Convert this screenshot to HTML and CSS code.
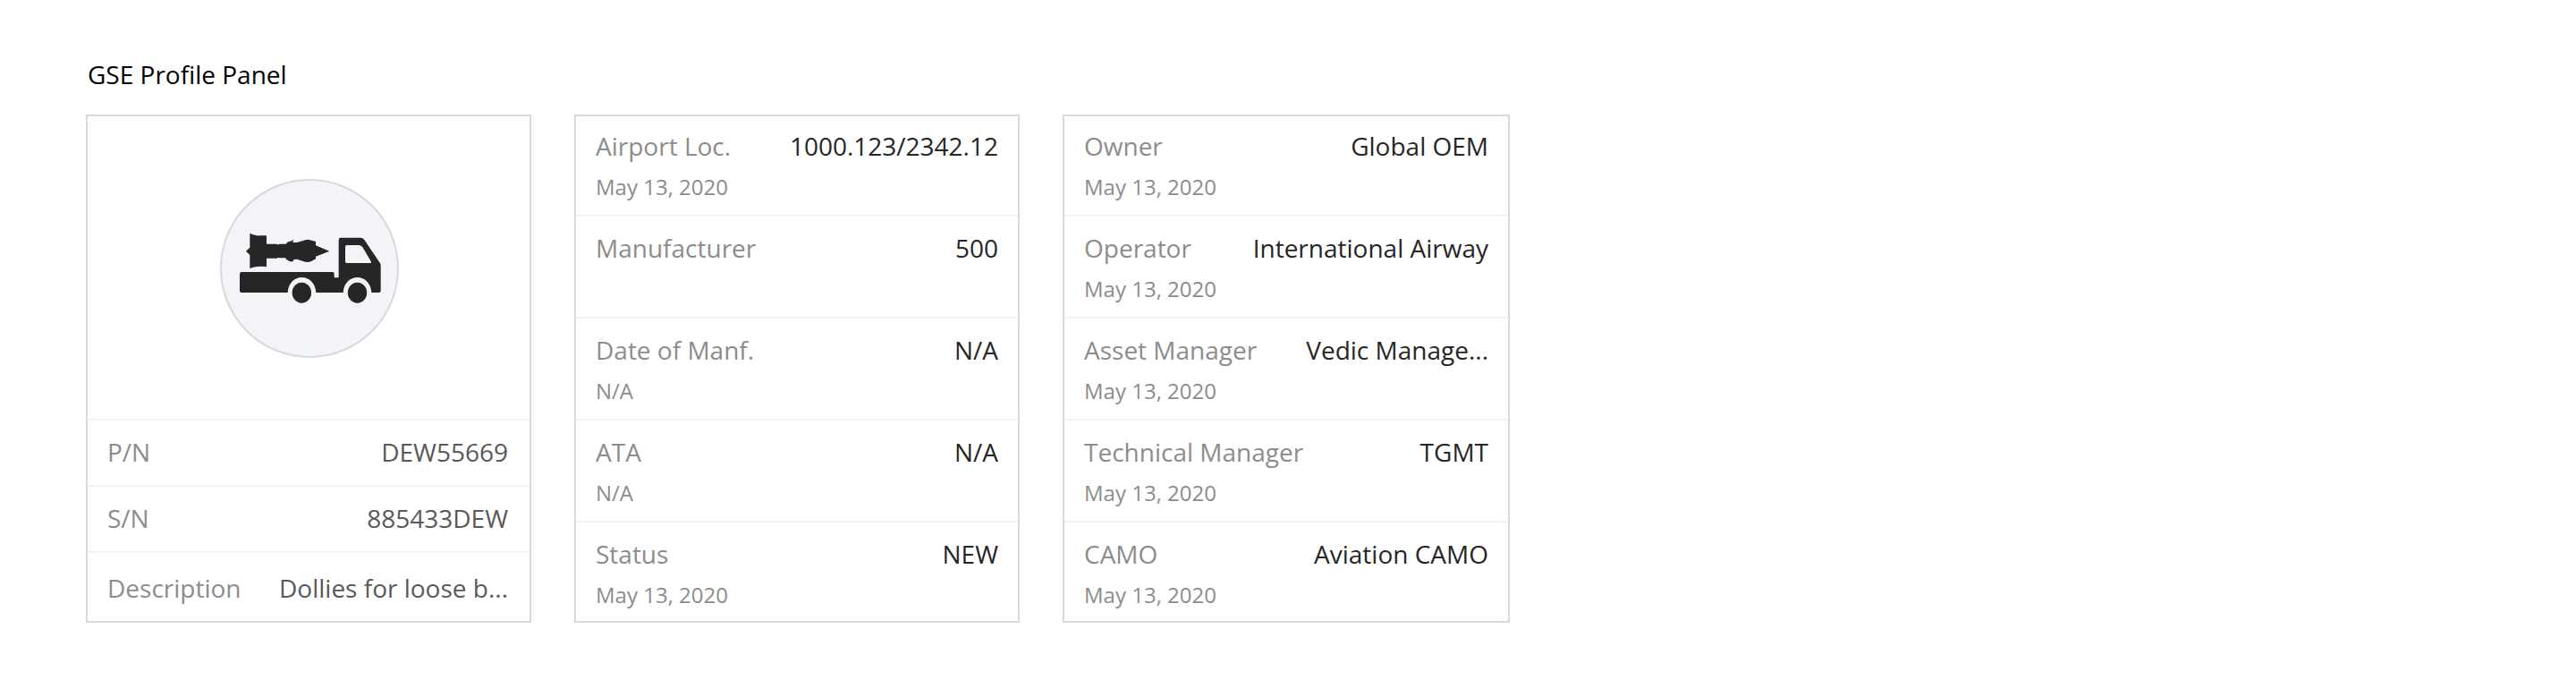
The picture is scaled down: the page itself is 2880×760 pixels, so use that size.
FILE: index.html
```html
<!DOCTYPE html>
<html lang="en">
<head>
    <meta charset="UTF-8">
    <meta name="viewport" content="width=device-width, initial-scale=1.0">
    <title>GSE Profile Panel</title>
    <link rel="stylesheet" href="styles.css">
</head>
<body>

    <h1 class="panel-title">GSE Profile Panel</h1>

    <div class="panel">
        <!-- Equipment picture and part numbers -->
        <section class="card summary">
            <div class="picture">
                <div class="avatar">
                    <svg class="truck-icon" viewBox="108 210 480 240" aria-hidden="true">
                        <path d="M148 212 Q156 216 168 219 Q174 221 180 220 L204 220 V248 H239 L242 251 L246 248 H269 Q272 240 281 239 L290 238 V234 L293 234 V243 L306 243 L334 235 L344 233 L369 240 V253 L415 272 L369 290 V298 L356 305 L344 309 L334 308 L306 299 L295 300 L293 307 H281 Q278 302 269 299 V295 H246 L242 293 L239 296 H204 V324 L180 323 Q160 324 148 330 V285 L135 272 L148 260 Z"/>
                        <path fill-rule="evenodd" d="M120 342 H426 Q431 342 431 348 V361 H446 V234 Q446 227 453 227 H519 Q527 227 532 234 L585 313 Q587 316 587 320 V405 Q587 411 581 411 H556 C554 379 533 360 509 360 C484 360 463 379 461 411 H370 C368 379 347 360 322 360 C298 360 277 379 275 411 H120 Q114 411 114 405 V348 Q114 342 120 342 Z M473 252 Q468 252 468 257 V307 Q468 312 473 312 H551 Q557 312 554 306 L527 260 Q522 252 514 252 Z"/>
                        <ellipse cx="322" cy="411.500" rx="32" ry="34.500"/>
                        <ellipse cx="508.500" cy="411.500" rx="32" ry="34.500"/>
                    </svg>
                </div>
            </div>
            <div class="summary-row">
                <span class="label">P/N</span>
                <span class="value">DEW55669</span>
            </div>
            <div class="summary-row">
                <span class="label">S/N</span>
                <span class="value">885433DEW</span>
            </div>
            <div class="summary-row">
                <span class="label">Description</span>
                <span class="value">Dollies for loose b...</span>
            </div>
        </section>

        <!-- Location and manufacturing -->
        <section class="card">
            <div class="row">
                <div class="line">
                    <span class="label">Airport Loc.</span>
                    <span class="value">1000.123/2342.12</span>
                </div>
                <div class="date">May 13, 2020</div>
            </div>
            <div class="row">
                <div class="line">
                    <span class="label">Manufacturer</span>
                    <span class="value">500</span>
                </div>
            </div>
            <div class="row">
                <div class="line">
                    <span class="label">Date of Manf.</span>
                    <span class="value">N/A</span>
                </div>
                <div class="date">N/A</div>
            </div>
            <div class="row">
                <div class="line">
                    <span class="label">ATA</span>
                    <span class="value">N/A</span>
                </div>
                <div class="date">N/A</div>
            </div>
            <div class="row">
                <div class="line">
                    <span class="label">Status</span>
                    <span class="value">NEW</span>
                </div>
                <div class="date">May 13, 2020</div>
            </div>
        </section>

        <!-- Ownership and management -->
        <section class="card">
            <div class="row">
                <div class="line">
                    <span class="label">Owner</span>
                    <span class="value">Global OEM</span>
                </div>
                <div class="date">May 13, 2020</div>
            </div>
            <div class="row">
                <div class="line">
                    <span class="label">Operator</span>
                    <span class="value">International Airway</span>
                </div>
                <div class="date">May 13, 2020</div>
            </div>
            <div class="row">
                <div class="line">
                    <span class="label">Asset Manager</span>
                    <span class="value">Vedic Manage...</span>
                </div>
                <div class="date">May 13, 2020</div>
            </div>
            <div class="row">
                <div class="line">
                    <span class="label">Technical Manager</span>
                    <span class="value">TGMT</span>
                </div>
                <div class="date">May 13, 2020</div>
            </div>
            <div class="row">
                <div class="line">
                    <span class="label">CAMO</span>
                    <span class="value">Aviation CAMO</span>
                </div>
                <div class="date">May 13, 2020</div>
            </div>
        </section>
    </div>

</body>
</html>
```

FILE: styles.css
```css
* {
    box-sizing: border-box;
}

body {
    margin: 0;
    padding: 64px 96px;
    background-color: #fff;
    font-family: "Open Sans", sans-serif;
    font-size: 28px;
    line-height: 38px;
    color: #262626;
}

.panel-title {
    margin: 0 0 26px 2px;
    font-size: 28px;
    font-weight: 400;
    color: #000;
}

.panel {
    display: grid;
    grid-template-columns: 498px 498px 500px;
    gap: 48px;
}

.card {
    height: 568px;
    border: 2px solid #d5d9e0;
    background-color: #fff;
}

.label,
.date {
    color: #8c8c8c;
}

.value {
    color: #262626;
    white-space: nowrap;
}

.picture {
    display: flex;
    justify-content: center;
    height: 340px;
    padding: 70px 0 0 2px;
    border-bottom: 2px solid #f2f3f8;
}

.avatar {
    display: flex;
    align-items: center;
    justify-content: center;
    width: 200px;
    height: 200px;
    border: 2px solid #d5d9e0;
    border-radius: 50%;
    background-color: #f2f4f8;
}

.truck-icon {
    width: 160px;
    height: 80px;
    fill: #262626;
}

.summary-row {
    display: flex;
    justify-content: space-between;
    height: 74px;
    padding: 16px 24px 0 22px;
    border-bottom: 2px solid #f2f3f8;
}

.summary-row:last-child {
    padding-top: 20px;
    border-bottom: none;
}

.summary-row .value {
    color: #595959;
}

.row {
    height: 114px;
    padding: 16px 22px 0;
    border-bottom: 2px solid #f2f3f8;
}

.row:first-child {
    height: 112px;
    padding-top: 14px;
}

.row:last-child {
    height: 110px;
    border-bottom: none;
}

.line {
    display: flex;
    justify-content: space-between;
}

.date {
    margin-top: 10px;
    font-size: 24px;
    line-height: 33px;
}
```
